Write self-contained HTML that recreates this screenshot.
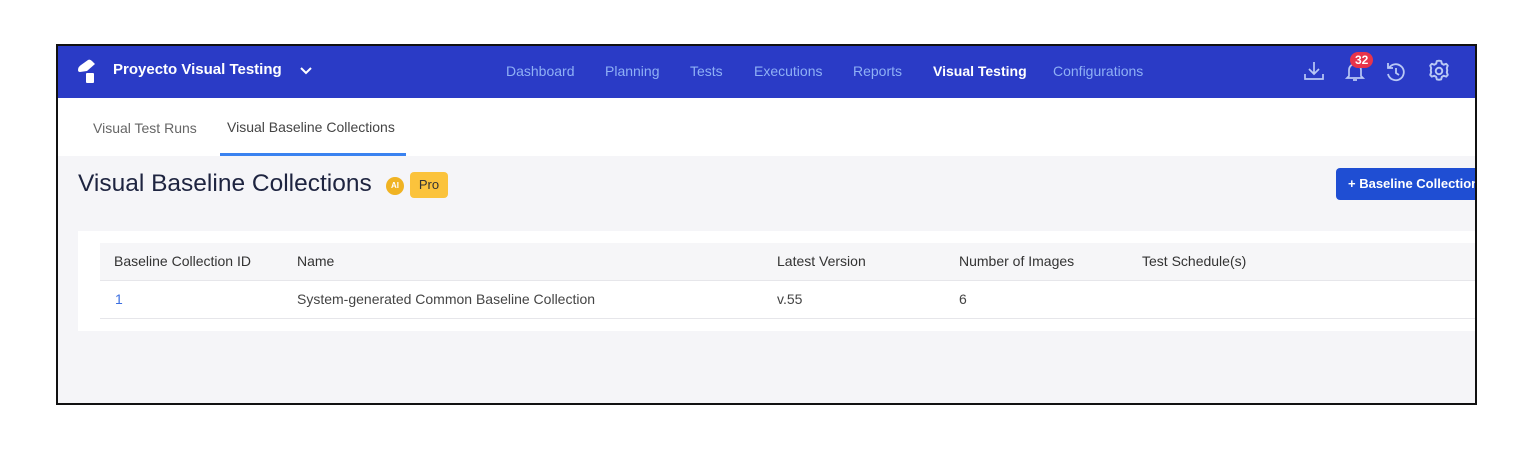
<!DOCTYPE html>
<html><head><style>
*{margin:0;padding:0;box-sizing:border-box}
body{width:1536px;height:449px;background:#fff;font-family:"Liberation Sans",sans-serif;position:relative;overflow:hidden}
.frame{position:absolute;left:56px;top:44px;width:1421px;height:361px;border:2px solid #111;background:#f5f5f8;overflow:hidden}
.nav{position:absolute;left:0;top:0;width:100%;height:52px;background:#2a3bc6}
.t{position:absolute;white-space:nowrap}
.nl{font-size:14px;color:#8fb0f5;top:17px}
.tabs{position:absolute;left:0;top:52px;width:100%;height:58px;background:#fff}
.card{position:absolute;left:20px;top:185px;width:1400px;height:100px;background:#fff}
.th{position:absolute;left:22px;top:12px;width:1380px;height:38px;background:#f6f6f8;border-bottom:1px solid #e6e6ea}
.tr{position:absolute;left:22px;top:50px;width:1380px;height:38px;border-bottom:1px solid #e6e6ea}
.c{font-size:14px;color:#333;top:10px}
</style></head><body>
<div class="frame">
 <div class="nav">
  <svg style="position:absolute;left:19px;top:13px" width="20" height="26" viewBox="0 0 20 26"><path d="M1 11 Q1 8 4 6 L11 1 Q13 0 15 2 L18 5 L10 12 L3 13 Q1 13 1 11 Z" fill="#fff"/><rect x="9" y="14" width="8" height="10" rx="1" fill="#fff"/></svg>
  <div class="t" style="left:55px;top:15px;font-size:15px;font-weight:bold;color:#fff">Proyecto Visual Testing</div>
  <svg style="position:absolute;left:241px;top:20px" width="14" height="10"><path d="M2 2 L7 7 L12 2" stroke="#fff" stroke-width="2" fill="none"/></svg>
  <div class="t nl" style="left:448px">Dashboard</div>
  <div class="t nl" style="left:547px">Planning</div>
  <div class="t nl" style="left:632px">Tests</div>
  <div class="t nl" style="left:696px">Executions</div>
  <div class="t nl" style="left:795px">Reports</div>
  <div class="t nl" style="left:875px;color:#fff;font-weight:bold">Visual Testing</div>
  <div class="t nl" style="left:995px">Configurations</div>
  <svg style="position:absolute;left:1245px;top:14px" width="22" height="22" viewBox="0 0 22 22" fill="none" stroke="#b9c8f5" stroke-width="1.7"><path d="M11 2v11M6 9l5 5 5-5M2 14v5h18v-5"/></svg>
  <svg style="position:absolute;left:1286px;top:14px" width="22" height="22" viewBox="0 0 22 22" fill="none" stroke="#b9c8f5" stroke-width="1.7"><path d="M5 16V10a6 6 0 0 1 12 0v6l2 2H3z M9 20h4"/></svg>
  <div class="t" style="left:1292px;top:6px;background:#e8344a;color:#fff;font-size:12px;font-weight:bold;border-radius:9px;padding:1px 5px">32</div>
  <svg style="position:absolute;left:1326px;top:14px" width="24" height="24" viewBox="0 0 24 24" fill="none" stroke="#b9c8f5" stroke-width="1.8"><path d="M5 8a8 8 0 1 1-1 6M4 3v5h5M12 8v5l3 2"/></svg>
  <svg style="position:absolute;left:1368px;top:12px" width="26" height="26" viewBox="0 0 24 24" fill="none" stroke="#b9c8f5" stroke-width="1.8" stroke-linejoin="round"><circle cx="12" cy="12" r="3"/><path d="M12 2.5l2 .3.6 2.4 1.8 1 2.3-.8 1.4 1.6-.9 2.3.4 2-.4 2 .9 2.3-1.4 1.6-2.3-.8-1.8 1-.6 2.4-2 .3-2-.3-.6-2.4-1.8-1-2.3.8-1.4-1.6.9-2.3-.4-2 .4-2-.9-2.3 1.4-1.6 2.3.8 1.8-1 .6-2.4z"/></svg>
 </div>
 <div class="tabs">
  <div class="t" style="left:35px;top:22px;font-size:14px;color:#666">Visual Test Runs</div>
  <div class="t" style="left:169px;top:21px;font-size:14px;color:#444">Visual Baseline Collections</div>
  <div style="position:absolute;left:162px;top:55px;width:186px;height:3px;background:#3a82f0"></div>
 </div>
 <div class="t" style="left:20px;top:124px;font-size:24.5px;color:#1e2440">Visual Baseline Collections</div>
 <div class="t" style="left:328px;top:131px;width:18px;height:18px;border-radius:50%;background:#f0b323;color:#fff;font-size:8px;font-weight:bold;text-align:center;line-height:18px">AI</div>
 <div class="t" style="left:352px;top:126px;width:38px;height:26px;border-radius:4px;background:#fbc33c;color:#333;font-size:13px;text-align:center;line-height:26px">Pro</div>
 <div class="t" style="left:1278px;top:122px;width:150px;height:32px;border-radius:4px;background:#1f4ed3;color:#fff;font-size:13px;font-weight:bold;line-height:32px;padding-left:12px">+ Baseline Collection</div>
 <div class="card">
  <div class="th">
   <div class="t c" style="left:14px">Baseline Collection ID</div>
   <div class="t c" style="left:197px">Name</div>
   <div class="t c" style="left:677px">Latest Version</div>
   <div class="t c" style="left:859px">Number of Images</div>
   <div class="t c" style="left:1042px">Test Schedule(s)</div>
  </div>
  <div class="tr">
   <div class="t c" style="left:15px;color:#3b6ee0">1</div>
   <div class="t c" style="left:197px;color:#444">System-generated Common Baseline Collection</div>
   <div class="t c" style="left:677px;color:#444">v.55</div>
   <div class="t c" style="left:859px;color:#444">6</div>
  </div>
 </div>
</div>
</body></html>
